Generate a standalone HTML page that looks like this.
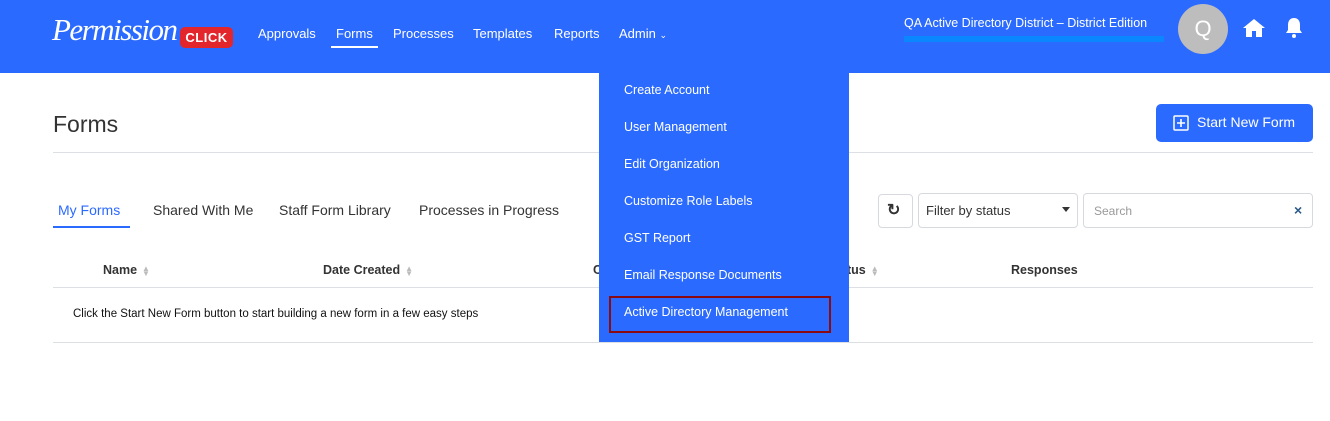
<!DOCTYPE html><html><head><style>
*{margin:0;padding:0;box-sizing:border-box}
body{width:1330px;height:421px;background:#fff;font-family:"Liberation Sans",sans-serif;position:relative;overflow:hidden;color:#222}
.a{position:absolute;white-space:nowrap}
.hdr{position:absolute;left:0;top:0;width:1330px;height:73px;background:#2b6aff}
.nav{color:#fff;font-size:13px;top:26px}
.dd{position:absolute;left:599px;top:73px;width:250px;height:269px;background:#2b6aff}
.dd div{position:absolute;left:25px;color:#fff;font-size:12.5px}
.line{position:absolute;height:1px;background:#dcdfe3;left:53px}
.th{font-size:12.5px;font-weight:bold;color:#333;top:263px}
.sort{display:inline-block;width:7px;margin-left:5px;color:#bbb;font-size:8px;line-height:5px;vertical-align:middle}
</style></head><body>
<div class="hdr"></div>
<div class="a" style="left:52px;top:12px;color:#fff;font-family:'Liberation Serif',serif;font-style:italic;font-size:31px;letter-spacing:-1.5px">Permission</div>
<div class="a" style="left:180px;top:27px;width:53px;height:21px;background:#e3262b;border-radius:5px;color:#fff;font-weight:bold;font-size:13px;text-align:center;padding-top:3px;letter-spacing:0.5px">CLICK</div>
<div class="a nav" style="left:258px">Approvals</div>
<div class="a nav" style="left:336px">Forms</div>
<div class="a" style="left:331px;top:46px;width:47px;height:2px;background:#fff"></div>
<div class="a nav" style="left:393px">Processes</div>
<div class="a nav" style="left:473px">Templates</div>
<div class="a nav" style="left:554px">Reports</div>
<div class="a nav" style="left:619px">Admin <span style="font-size:9px">&#8964;</span></div>
<div class="a" style="left:904px;top:16px;color:#fff;font-size:12.5px">QA Active Directory District – District Edition</div>
<div class="a" style="left:904px;top:36px;width:260px;height:6px;background:#0a86ff"></div>
<div class="a" style="left:1178px;top:4px;width:50px;height:50px;border-radius:50%;background:#bdbdbd;color:#fff;font-size:22px;text-align:center;line-height:50px">Q</div>
<svg class="a" style="left:1242px;top:18px" width="24" height="20" viewBox="0 0 24 20"><path d="M12 1L1 10h3v9h6v-6h4v6h6v-9h3z" fill="#fff"/></svg>
<svg class="a" style="left:1285px;top:17px" width="18" height="22" viewBox="0 0 18 22"><path d="M9 1c-4 0-6 3-6 7v5l-2 3h16l-2-3V8c0-4-2-7-6-7z" fill="#fff"/><circle cx="9" cy="19" r="2" fill="#fff"/></svg>

<div class="a" style="left:53px;top:111px;font-size:23px;color:#333">Forms</div>
<div class="a" style="left:1156px;top:104px;width:157px;height:38px;background:#2b6aff;border-radius:5px"></div>
<svg class="a" style="left:1173px;top:115px" width="16" height="16"><rect x="1" y="1" width="14" height="14" fill="none" stroke="#fff" stroke-width="1.5" rx="1"/><path d="M8 4v8M4 8h8" stroke="#fff" stroke-width="1.6"/></svg>
<div class="a" style="left:1197px;top:114px;color:#fff;font-size:14px">Start New Form</div>
<div class="line" style="top:152px;width:1260px"></div>

<div class="a" style="left:58px;top:202px;font-size:14px;color:#2b6aff">My Forms</div>
<div class="a" style="left:53px;top:226px;width:77px;height:2px;background:#2b6aff"></div>
<div class="a" style="left:153px;top:202px;font-size:14px;color:#333">Shared With Me</div>
<div class="a" style="left:279px;top:202px;font-size:14px;color:#333">Staff Form Library</div>
<div class="a" style="left:419px;top:202px;font-size:14px;color:#333">Processes in Progress</div>

<div class="a" style="left:878px;top:194px;width:35px;height:34px;border:1px solid #d6d9dd;border-radius:4px"></div>
<div class="a" style="left:887px;top:200px;font-size:16px;font-weight:bold;color:#333">&#8635;</div>
<div class="a" style="left:918px;top:193px;width:160px;height:35px;border:1px solid #d6d9dd;border-radius:4px"></div>
<div class="a" style="left:926px;top:203px;font-size:13px;color:#333">Filter by status</div>
<div class="a" style="left:1062px;top:207px;width:0;height:0;border-left:4px solid transparent;border-right:4px solid transparent;border-top:5px solid #333"></div>
<div class="a" style="left:1083px;top:193px;width:230px;height:35px;border:1px solid #d6d9dd;border-radius:4px"></div>
<div class="a" style="left:1094px;top:204px;font-size:12px;color:#999">Search</div>
<div class="a" style="left:1294px;top:202px;font-size:14px;font-weight:bold;color:#2a5a8a">×</div>

<div class="a th" style="left:103px">Name<span class="sort">▲<br>▼</span></div>
<div class="a th" style="left:323px">Date Created<span class="sort">▲<br>▼</span></div>
<div class="a th" style="left:593px">C</div>
<div class="a th" style="left:840px">atus<span class="sort">▲<br>▼</span></div>
<div class="a th" style="left:1011px">Responses</div>
<div class="line" style="top:287px;width:1260px"></div>
<div class="a" style="left:73px;top:308px;font-size:11.5px;color:#111">Click the Start New Form button to start building a new form in a few easy steps</div>
<div class="line" style="top:342px;width:1260px"></div>

<div class="dd">
<div style="top:10px">Create Account</div>
<div style="top:47px">User Management</div>
<div style="top:84px">Edit Organization</div>
<div style="top:121px">Customize Role Labels</div>
<div style="top:158px">GST Report</div>
<div style="top:195px">Email Response Documents</div>
<div style="top:232px">Active Directory Management</div>
<span style="position:absolute;left:10px;top:223px;width:222px;height:37px;border:2px solid #8b0a12"></span>
</div>
</body></html>
